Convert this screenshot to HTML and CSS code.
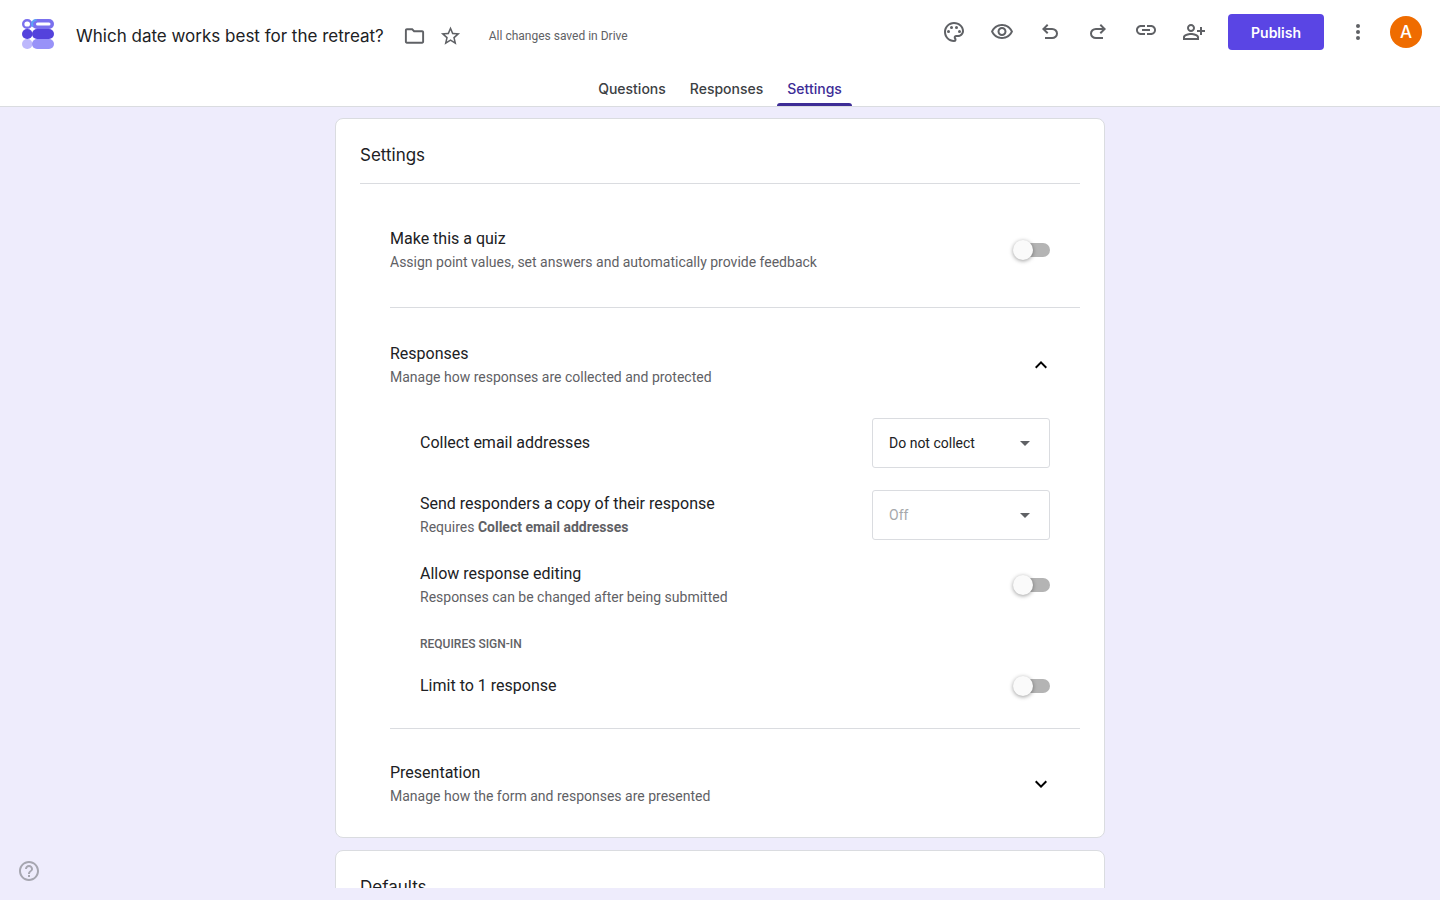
FILE: index.html
```html
<!doctype html>
<html lang="en">
<head>
    <meta charset="UTF-8">
    <meta name="viewport" content="width=device-width, initial-scale=1.0">
    <title>Which date works best for the retreat?</title>
    <link rel="stylesheet" href="styles.css">
</head>
<body>
    <header class="header">
        <div class="topbar">
            <a class="logo" href="#" aria-label="Forms home">
                <svg width="32" height="30" viewBox="0 0 32 30">
                    <rect x="1.2" y="1.2" width="8" height="7.6" rx="3.8" fill="none" stroke="#7a70ee" stroke-width="2.4"/>
                    <rect x="10" y="0" width="22" height="10" rx="5" fill="#7a70ee"/>
                    <path d="M14.5 1a4 4 0 0 0-3.5 6.500" fill="none" stroke="#5ba4f5" stroke-width="2"/>
                    <rect x="14" y="3.4" width="14.5" height="3" rx="1.5" fill="#fff"/>
                    <rect x="0" y="10" width="10.5" height="10" rx="5" fill="#5442dc"/>
                    <rect x="10" y="10" width="22" height="10" rx="5" fill="#5442dc"/>
                    <rect x="0" y="20" width="10.5" height="10" rx="5" fill="#bdb8fc"/>
                    <rect x="10" y="20" width="22" height="10" rx="5" fill="#9892f8"/>
                </svg>
            </a>
            <h1 class="form-title">Which date works best for the retreat?</h1>
            <div class="file-actions">
                <button class="icon-button small" aria-label="Move to folder">
                    <svg class="icon" viewBox="0 0 24 24"><path d="M9.17 6l2 2H20v10H4V6h5.17M10 4H4c-1.1 0-1.99.9-1.99 2L2 18c0 1.1.9 2 2 2h16c1.1 0 2-.9 2-2V8c0-1.1-.9-2-2-2h-8l-2-2z"/></svg>
                </button>
                <button class="icon-button small" aria-label="Star">
                    <svg class="icon" viewBox="0 0 24 24"><path d="M22 9.24l-7.19-.62L12 2 9.19 8.63 2 9.24l5.46 4.73L5.82 21 12 17.27 18.18 21l-1.63-7.03L22 9.24zM12 15.4l-3.76 2.27 1-4.28-3.32-2.88 4.38-.38L12 6.1l1.71 4.04 4.38.38-3.32 2.88 1 4.28L12 15.4z"/></svg>
                </button>
            </div>
            <span class="save-state">All changes saved in Drive</span>
            <div class="toolbar">
                <button class="icon-button" aria-label="Customize theme">
                    <svg class="icon" viewBox="0 0 24 24"><path d="M12 22C6.49 22 2 17.51 2 12S6.49 2 12 2s10 4.04 10 9c0 3.31-2.69 6-6 6h-1.77c-.28 0-.5.22-.5.5 0 .12.05.23.13.33.41.47.64 1.06.64 1.67A2.5 2.5 0 0 1 12 22zm0-18c-4.41 0-8 3.59-8 8s3.59 8 8 8c.28 0 .5-.22.5-.5a.54.54 0 0 0-.14-.35c-.41-.46-.63-1.05-.63-1.65a2.5 2.5 0 0 1 2.5-2.5H16c2.21 0 4-1.79 4-4 0-3.86-3.59-7-8-7z"/><circle cx="6.5" cy="11.5" r="1.5"/><circle cx="9.5" cy="7.5" r="1.5"/><circle cx="14.5" cy="7.5" r="1.5"/><circle cx="17.5" cy="11.5" r="1.5"/></svg>
                </button>
                <button class="icon-button" aria-label="Preview">
                    <svg class="icon" viewBox="0 0 24 24"><path d="M12 6c3.79 0 7.17 2.13 8.82 5.5-1.65 3.37-5.02 5.5-8.82 5.5s-7.17-2.13-8.82-5.5C4.83 8.13 8.21 6 12 6m0-2C7 4 2.73 7.11 1 11.5 2.73 15.89 7 19 12 19s9.27-3.11 11-7.5C21.27 7.11 17 4 12 4zm0 5c1.38 0 2.5 1.12 2.5 2.5S13.38 14 12 14s-2.5-1.12-2.5-2.5S10.62 9 12 9m0-2c-2.48 0-4.5 2.02-4.5 4.5S9.52 16 12 16s4.5-2.02 4.5-4.5S14.48 7 12 7z"/></svg>
                </button>
                <button class="icon-button" aria-label="Undo">
                    <svg class="icon" viewBox="0 0 24 24"><path d="M7 19v-2h7.1q1.575 0 2.737-1T18 13.5 16.838 11 14.1 10H7.8l2.6 2.6L9 14 4 9l5-5 1.4 1.4L7.8 8h6.3q2.425 0 4.163 1.575T20 13.5t-1.737 3.925T14.1 19z"/></svg>
                </button>
                <button class="icon-button" aria-label="Redo">
                    <svg class="icon flip" viewBox="0 0 24 24"><path d="M7 19v-2h7.1q1.575 0 2.737-1T18 13.5 16.838 11 14.1 10H7.8l2.6 2.6L9 14 4 9l5-5 1.4 1.4L7.8 8h6.3q2.425 0 4.163 1.575T20 13.5t-1.737 3.925T14.1 19z"/></svg>
                </button>
                <button class="icon-button" aria-label="Copy responder link">
                    <svg class="icon" viewBox="0 2 24 24"><path d="M3.9 12c0-1.71 1.39-3.1 3.1-3.1h4V7H7c-2.76 0-5 2.24-5 5s2.24 5 5 5h4v-1.9H7c-1.71 0-3.1-1.39-3.1-3.1zM8 13h8v-2H8v2zm9-6h-4v1.9h4c1.71 0 3.1 1.39 3.1 3.1s-1.39 3.1-3.1 3.1h-4V17h4c2.76 0 5-2.24 5-5s-2.24-5-5-5z"/></svg>
                </button>
                <button class="icon-button" aria-label="Share">
                    <svg class="icon" viewBox="0 0 24 24"><path d="M9 12c2.21 0 4-1.79 4-4s-1.79-4-4-4-4 1.79-4 4 1.79 4 4 4zm0-6c1.1 0 2 .9 2 2s-.9 2-2 2-2-.9-2-2 .9-2 2-2zm0 7c-2.67 0-8 1.34-8 4v3h16v-3c0-2.66-5.33-4-8-4zm6 5H3v-.99C3.2 16.29 6.3 15 9 15s5.8 1.29 6 2v1zM20 10V7h-2v3h-3v2h3v3h2v-3h3v-2z"/></svg>
                </button>
                <button class="publish">Publish</button>
                <button class="icon-button" aria-label="More">
                    <svg class="icon" viewBox="0 0 24 24"><circle cx="12" cy="6" r="2"/><circle cx="12" cy="12" r="2"/><circle cx="12" cy="18" r="2"/></svg>
                </button>
                <button class="avatar" aria-label="Account">A</button>
            </div>
        </div>
        <nav class="tabs">
            <a class="tab" href="#questions">Questions</a>
            <a class="tab" href="#responses">Responses</a>
            <a class="tab active" href="#settings" aria-current="page">Settings</a>
        </nav>
    </header>

    <main class="content">
        <section class="card">
            <h2 class="card-title">Settings</h2>
            <div class="card-body">
                <div class="section">
                    <div class="row">
                        <label class="text" for="quiz">
                            <span class="name">Make this a quiz</span>
                            <span class="hint">Assign point values, set answers and automatically provide feedback</span>
                        </label>
                        <input class="toggle" id="quiz" type="checkbox" role="switch">
                    </div>
                </div>
                <div class="section expanded">
                    <div class="row">
                        <div class="text">
                            <h3 class="name">Responses</h3>
                            <span class="hint">Manage how responses are collected and protected</span>
                        </div>
                        <button class="expand" aria-label="Collapse responses" aria-expanded="true">
                            <svg class="chevron" viewBox="0 0 24 24"><path d="M12 8l-6 6 1.41 1.41L12 10.83l4.59 4.58L18 14z"/></svg>
                        </button>
                    </div>
                    <div class="options">
                        <div class="row">
                            <label class="text" for="collect">
                                <span class="name">Collect email addresses</span>
                            </label>
                            <div class="select">
                                <select id="collect">
                                    <option>Do not collect</option>
                                </select>
                                <svg class="arrow" viewBox="0 0 24 24"><path d="M7 10l5 5 5-5z"/></svg>
                            </div>
                        </div>
                        <div class="row">
                            <label class="text" for="copy">
                                <span class="name">Send responders a copy of their response</span>
                                <span class="hint">Requires <b>Collect email addresses</b></span>
                            </label>
                            <div class="select">
                                <select id="copy" disabled>
                                    <option>Off</option>
                                </select>
                                <svg class="arrow" viewBox="0 0 24 24"><path d="M7 10l5 5 5-5z"/></svg>
                            </div>
                        </div>
                        <div class="row">
                            <label class="text" for="editing">
                                <span class="name">Allow response editing</span>
                                <span class="hint">Responses can be changed after being submitted</span>
                            </label>
                            <input class="toggle" id="editing" type="checkbox" role="switch">
                        </div>
                        <h4 class="group-title">REQUIRES SIGN-IN</h4>
                        <div class="row">
                            <label class="text" for="limit">
                                <span class="name">Limit to 1 response</span>
                            </label>
                            <input class="toggle" id="limit" type="checkbox" role="switch">
                        </div>
                    </div>
                </div>
                <div class="section">
                    <div class="row">
                        <div class="text">
                            <h3 class="name">Presentation</h3>
                            <span class="hint">Manage how the form and responses are presented</span>
                        </div>
                        <button class="expand" aria-label="Expand presentation" aria-expanded="false">
                            <svg class="chevron" viewBox="0 0 24 24"><path d="M16.59 8.59L12 13.17 7.41 8.59 6 10l6 6 6-6z"/></svg>
                        </button>
                    </div>
                </div>
            </div>
        </section>
        <section class="card">
            <h2 class="card-title">Defaults</h2>
        </section>
    </main>

    <button class="help" aria-label="Help">
        <svg class="icon" viewBox="0 0 24 24"><path d="M11 18h2v-2h-2v2zm1-16C6.48 2 2 6.48 2 12s4.48 10 10 10 10-4.48 10-10S17.52 2 12 2zm0 18c-4.41 0-8-3.59-8-8s3.59-8 8-8 8 3.59 8 8-3.59 8-8 8zm0-14c-2.21 0-4 1.79-4 4h2c0-1.1.9-2 2-2s2 .9 2 2c0 2-3 1.75-3 5h2c0-2.25 3-2.5 3-5 0-2.21-1.79-4-4-4z"/></svg>
    </button>
</body>
</html>
```
FILE: styles.css
```css
:root {
    --primary-color: #5a45e4;
    --active-color: #3d2c96;
    --page-color: #eeecfc;
    --text-color: #202124;
    --muted-color: #5f6165;
    --border-color: #dadce0;
    --title-font: Inter, "Open Sans", sans-serif;
}

* {
    box-sizing: border-box;
}

body {
    margin: 0;
    height: 100vh;
    display: flex;
    flex-direction: column;
    font-family: Roboto, "Liberation Sans", sans-serif;
    font-size: 14px;
    color: var(--text-color);
    background-color: var(--page-color);
}

h1, h2, h3, h4 {
    margin: 0;
    font-weight: 400;
}

button {
    border: none;
    padding: 0;
    background: none;
    cursor: pointer;
}

.header {
    flex: none;
    background-color: #fff;
    border-bottom: 1px solid var(--border-color);
}

.topbar {
    display: flex;
    align-items: center;
    height: 72px;
    padding: 0 18px 0 22px;
}

.logo {
    display: flex;
    align-self: flex-start;
    margin: 19px 22px 0 0;
}

.form-title {
    font-family: var(--title-font);
    font-size: 17px;
    line-height: 24px;
    white-space: nowrap;
}

.file-actions {
    display: flex;
    margin-left: 13px;
}

.icon-button {
    display: flex;
    align-items: center;
    justify-content: center;
    width: 48px;
    height: 48px;
}

.icon-button.small {
    width: 36px;
    height: 36px;
}

.icon {
    width: 24px;
    height: 24px;
    fill: var(--muted-color);
}

.icon-button.small .icon {
    width: 23px;
}

.flip {
    transform: scaleX(-1);
}

.save-state {
    margin-left: 20px;
    font-size: 12px;
    color: var(--muted-color);
    white-space: nowrap;
}

.toolbar {
    display: flex;
    align-items: center;
    align-self: flex-start;
    height: 64px;
    margin-left: auto;
}

.publish {
    width: 96px;
    height: 36px;
    margin: 0 10px;
    border-radius: 4px;
    font-family: var(--title-font);
    font-size: 14px;
    font-weight: 600;
    color: #fff;
    background-color: var(--primary-color);
}

.avatar {
    width: 32px;
    height: 32px;
    margin-left: 8px;
    border-radius: 50%;
    font-family: var(--title-font);
    font-size: 17px;
    font-weight: 500;
    color: #fff;
    background-color: #ef6c00;
}

.tabs {
    display: flex;
    justify-content: center;
    gap: 4px;
    height: 34px;
}

.tab {
    position: relative;
    padding: 0 10px;
    font-family: var(--title-font);
    font-size: 14px;
    font-weight: 500;
    line-height: 34px;
    color: #3c4043;
    text-decoration: none;
}

.tab.active {
    color: var(--active-color);
}

.tab.active::after {
    content: "";
    position: absolute;
    left: 0;
    right: 0;
    bottom: 0;
    height: 3px;
    border-radius: 3px 3px 0 0;
    background-color: var(--active-color);
}

.content {
    flex: 1;
    min-height: 0;
    margin-bottom: 12px;
    padding: 11px 16px 0;
    overflow-y: auto;
    scrollbar-width: none;
}

.card {
    max-width: 770px;
    margin: 0 auto 12px;
    padding: 0 24px;
    background-color: #fff;
    border: 1px solid var(--border-color);
    border-radius: 8px;
}

.card-title {
    padding: 24px 0 16px;
    border-bottom: 1px solid var(--border-color);
    font-family: var(--title-font);
    font-size: 17px;
    line-height: 24px;
}

.card-body {
    padding: 11px 0 0 30px;
}

.section {
    padding: 32px 30px 30px 0;
}

.section:first-child {
    padding-bottom: 34px;
}

.section.expanded {
    padding-top: 34px;
}

.section + .section {
    border-top: 1px solid var(--border-color);
}

.row {
    display: flex;
    align-items: center;
    justify-content: space-between;
    gap: 24px;
}

.text {
    display: flex;
    flex-direction: column;
}

.name {
    font-size: 16px;
    line-height: 24px;
}

.hint {
    font-size: 14px;
    line-height: 22px;
    color: var(--muted-color);
}

.options {
    display: flex;
    flex-direction: column;
    gap: 22px;
    padding: 30px 0 0 30px;
}

.group-title {
    margin-top: 6px;
    font-size: 12px;
    font-weight: 500;
    line-height: 16px;
    color: var(--muted-color);
}

.toggle {
    appearance: none;
    position: relative;
    flex: none;
    width: 36px;
    height: 14px;
    margin: 0;
    border-radius: 7px;
    background-color: #b4b4b4;
    cursor: pointer;
}

.toggle::before {
    content: "";
    position: absolute;
    top: -3px;
    left: 0;
    width: 20px;
    height: 20px;
    margin-left: -1px;
    border-radius: 50%;
    background-color: #fafafa;
    box-shadow: 0 1px 4px rgba(0, 0, 0, 0.4);
}

.toggle:checked {
    background-color: var(--primary-color);
}

.toggle:checked::before {
    left: 18px;
}

.expand {
    display: flex;
    margin-right: -3px;
}

.chevron {
    width: 24px;
    height: 24px;
    fill: #000;
}

.select {
    position: relative;
    flex: none;
    width: 178px;
}

.select select {
    appearance: none;
    display: block;
    width: 100%;
    height: 50px;
    padding: 0 40px 0 16px;
    border: 1px solid var(--border-color);
    border-radius: 3px;
    font: inherit;
    color: var(--text-color);
    background-color: #fff;
}

.select select:disabled {
    color: #a6a8ab;
    opacity: 1;
}

.arrow {
    position: absolute;
    top: 13px;
    right: 13px;
    width: 24px;
    height: 24px;
    fill: var(--muted-color);
    pointer-events: none;
}

.help {
    position: fixed;
    left: 17px;
    bottom: 17px;
    display: flex;
    opacity: 0.5;
}
```
